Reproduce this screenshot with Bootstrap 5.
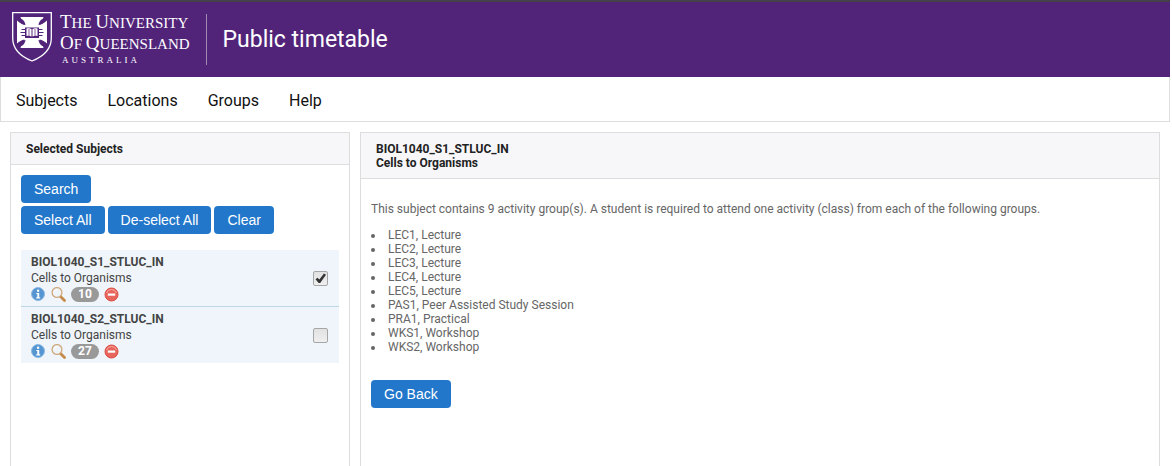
<!DOCTYPE html>
<html lang="en">
<head>
<meta charset="utf-8">
<meta name="viewport" content="width=device-width, initial-scale=1">
<title>Public timetable</title>
<link href="https://cdn.jsdelivr.net/npm/bootstrap@5.3.0/dist/css/bootstrap.min.css" rel="stylesheet">
<style>
  body { font-family: Roboto, "Liberation Sans", sans-serif; font-size: 12px; line-height: 14px; color: #666; background: #fff; padding-right: 2px; }
  .site-header { background: #51247a; min-height: 77px; border-top: 2px solid #454148; padding: 0 12px; }
  .brand { color: #fff; font-family: "Liberation Serif", serif; text-decoration: none; }
  .brand:hover { color: #fff; }
  .brand-line { font-size: 15px; line-height: 19px; display: block; white-space: nowrap; }
  .brand-line b { font-size: 19px; font-weight: 400; }
  .brand-country { font-size: 9px; line-height: 13px; letter-spacing: 3px; padding-left: 2px; display: block; }
  .brand-rule { width: 1px; height: 51px; background: #a08bb5; margin: 0 16px; }
  .site-title { font-size: 23px; line-height: 28px; font-weight: 400; color: #fff; }
  .site-nav { border: 1px solid #ddd; border-top: 0; padding: 14px 15px 10px; gap: 30px; }
  .site-nav .nav-link { padding: 0; font-size: 16px; line-height: 20px; color: #111; }
  .panels { display: grid; grid-template-columns: minmax(0, 17fr) minmax(0, 40fr); gap: 10px; padding: 10px 10px 0; }
  .panel { border: 1px solid #ddd; border-bottom: 0; border-radius: 0; }
  .panel .card-header { background: #f7f7f9; border-bottom: 1px solid #ddd; border-radius: 0; padding: 9px 15px 8px; color: #222; }
  .panel h2 { font-size: 12px; line-height: 14px; font-weight: 700; margin: 0; }
  .panel .card-body { padding: 10px; }
  .panel .btn { background: #2277cb; border: 0; border-radius: 4px; color: #fff; font: 14px/16px "Liberation Sans", sans-serif; padding: 6px 13px; }
  .panel .btn:hover { background: #1b66b0; }
  .actions { gap: 3px; margin: 3px 0 16px; }
  .subject { background: #eff5fa; padding: 4px 11px 4px 10px; color: #444; line-height: 16px; }
  .subject + .subject { border-top: 1px solid #bcd6e6; }
  .subject label, .subject strong { display: block; }
  .tools { height: 16px; gap: 5px; }
  .tool { border: 0; background: none; padding: 0; width: 15px; height: 16px; display: flex; align-items: center; }
  .count { background: #999; color: #fff; font-size: 12px; line-height: 15px; padding: 0; width: 28px; border-radius: 8px; }
  .tick { appearance: none; width: 15px; height: 15px; margin: 0; flex: none; border: 1px solid #a6a6a6; border-radius: 2px; background: linear-gradient(#e2e2e2, #efefef); }
  .tick:checked { background: url("data:image/svg+xml,%3Csvg xmlns='http://www.w3.org/2000/svg' viewBox='0 0 13 13'%3E%3Cpath d='M1.500 7.200l2-1.500 1.800 1.800L10 1.500l2 1.200-5.800 8.300H4.600z' fill='%23333'/%3E%3C/svg%3E") center/13px, linear-gradient(#e2e2e2, #efefef); }
  .intro { margin: 13px 0 0; }
  .groups { list-style: none; padding: 0; margin: 12px 0 26px; }
  .groups li { display: flex; align-items: center; gap: 13px; }
  .groups li::before { content: ""; width: 4px; height: 4px; border-radius: 50%; background: #666; margin-top: 2px; }
</style>
<script src="https://cdn.jsdelivr.net/npm/bootstrap@5.3.0/dist/js/bootstrap.bundle.min.js"></script>
</head>
<body class="d-flex flex-column min-vh-100">
<svg class="d-none" aria-hidden="true">
  <symbol id="info" viewBox="0 0 15 15"><circle cx="7" cy="7" r="6.500" fill="#5596d2" stroke="#8db9e2"/><circle cx="7.100" cy="3.800" r="1.200" fill="#fff"/><path d="M5.300 6h2.900v4.200h1v1.200H5.200v-1.200h1.100V7.100h-1z" fill="#fff"/></symbol>
  <symbol id="lens" viewBox="0 0 15 15"><path d="M9.500 9.500l4 4" stroke="#c58a4a" stroke-width="2.800" stroke-linecap="round"/><circle cx="6" cy="5.500" r="4.900" fill="#eef4fa" stroke="#cfa87b" stroke-width="1.300"/><path d="M3.200 5a3.200 3.200 0 0 1 3-2.300" fill="none" stroke="#fff"/></symbol>
  <symbol id="minus" viewBox="0 0 15 15"><circle cx="7.500" cy="7.500" r="6.500" fill="#e8655c" stroke="#dd4b42"/><path d="M2.500 6a5.300 5.300 0 0 1 10 0" fill="none" stroke="#f5aaa4"/><path d="M3.800 6.500h7.400v2.200H3.800z" fill="#fff"/></symbol>
</svg>

<header class="site-header d-flex align-items-center">
  <a class="brand d-flex align-items-start" href="#">
    <svg width="40" height="50" viewBox="0 0 40 50" aria-hidden="true">
      <path d="M.7.700h38.600V26c0 12-8 18.500-19.300 23C8.700 44.500.7 38 .7 26z" fill="none" stroke="#fff" stroke-width="1.300"/>
      <path d="M8.500 5h23c-.5 3-2.500 5-4 7.500 3-.5 5-2 7.500-4v23c-2.500-2-4.500-3.500-7.500-4 1.500 2.500 3.500 5 4 8.500h-23c.5-3.500 2.500-6 4-8.500-3 .5-5 2-7.500 4v-23c2.500 2 4.500 3.500 7.500 4-1.500-2.500-3.500-4.500-4-7.500z" fill="#fff"/>
      <g fill="#51247a">
        <path d="M6 6c4 0 7 3 7.500 7C9 12.500 6 10 6 6zM34 6c-4 0-7 3-7.500 7 4.500-.5 7.500-3 7.500-7zM6 35c4 0 7-3 7.500-7C9 28.500 6 31 6 35zM34 35c-4 0-7-3-7.500-7 4.500.5 7.500 3 7.500 7z"/>
        <path d="M13 15.500h14v10.500H13z"/>
      </g>
      <path d="M14.500 16.500c2-.5 3.500-.3 5 .6V24.500c-1.500-.8-3-1-5-.6zM25.500 16.500c-2-.5-3.500-.3-5 .6V24.500c1.500-.8 3-1 5-.6z" fill="#fff"/>
      <path d="M17 17v7M23 17v7" stroke="#51247a" stroke-width=".7"/>
      <path d="M9.500 17.500H13M8.500 20.500H13M9.500 23.500H13M27 17.500h3.500M27 20.500h4.500M27 23.500h3.500" stroke="#51247a" stroke-width="1.200"/>
    </svg>
    <span class="ms-2">
      <span class="brand-line"><b>T</b>HE <b>U</b>NIVERSITY</span>
      <span class="brand-line"><b>O</b>F <b>Q</b>UEENSLAND</span>
      <span class="brand-country">AUSTRALIA</span>
    </span>
  </a>
  <div class="brand-rule"></div>
  <h1 class="site-title m-0">Public timetable</h1>
</header>

<nav class="site-nav nav" aria-label="Main">
  <a class="nav-link" href="#">Subjects</a>
  <a class="nav-link" href="#">Locations</a>
  <a class="nav-link" href="#">Groups</a>
  <a class="nav-link" href="#">Help</a>
</nav>

<main class="panels flex-grow-1">
  <section class="card panel">
    <div class="card-header"><h2>Selected Subjects</h2></div>
    <div class="card-body">
      <button class="btn d-block" type="button">Search</button>
      <div class="actions d-flex flex-wrap">
        <button class="btn" type="button">Select All</button>
        <button class="btn" type="button">De-select All</button>
        <button class="btn" type="button">Clear</button>
      </div>
      <div class="subject d-flex align-items-center justify-content-between">
        <div>
          <label for="s1"><strong>BIOL1040_S1_STLUC_IN</strong>Cells to Organisms</label>
          <div class="tools d-flex align-items-center">
            <button class="tool" type="button" aria-label="Information"><svg width="15" height="15"><use href="#info"/></svg></button>
            <button class="tool" type="button" aria-label="View"><svg width="15" height="15"><use href="#lens"/></svg></button>
            <span class="count badge">10</span>
            <button class="tool" type="button" aria-label="Remove"><svg width="15" height="15"><use href="#minus"/></svg></button>
          </div>
        </div>
        <input class="tick" type="checkbox" id="s1" checked>
      </div>
      <div class="subject d-flex align-items-center justify-content-between">
        <div>
          <label for="s2"><strong>BIOL1040_S2_STLUC_IN</strong>Cells to Organisms</label>
          <div class="tools d-flex align-items-center">
            <button class="tool" type="button" aria-label="Information"><svg width="15" height="15"><use href="#info"/></svg></button>
            <button class="tool" type="button" aria-label="View"><svg width="15" height="15"><use href="#lens"/></svg></button>
            <span class="count badge">27</span>
            <button class="tool" type="button" aria-label="Remove"><svg width="15" height="15"><use href="#minus"/></svg></button>
          </div>
        </div>
        <input class="tick" type="checkbox" id="s2">
      </div>
    </div>
  </section>

  <section class="card panel">
    <div class="card-header"><h2>BIOL1040_S1_STLUC_IN<br>Cells to Organisms</h2></div>
    <div class="card-body">
      <p class="intro">This subject contains 9 activity group(s). A student is required to attend one activity (class) from each of the following groups.</p>
      <ul class="groups">
        <li>LEC1, Lecture</li>
        <li>LEC2, Lecture</li>
        <li>LEC3, Lecture</li>
        <li>LEC4, Lecture</li>
        <li>LEC5, Lecture</li>
        <li>PAS1, Peer Assisted Study Session</li>
        <li>PRA1, Practical</li>
        <li>WKS1, Workshop</li>
        <li>WKS2, Workshop</li>
      </ul>
      <button class="btn" type="button">Go Back</button>
    </div>
  </section>
</main>
</body>
</html>
